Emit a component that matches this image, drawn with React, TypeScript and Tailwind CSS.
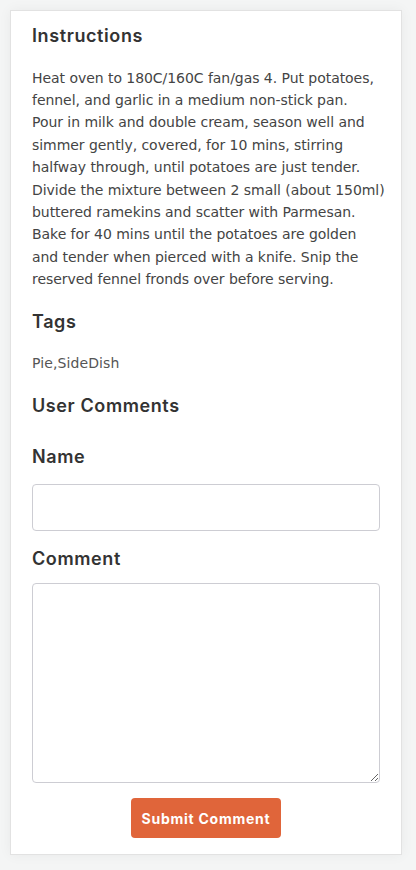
function Heading({ children, className = '' }: { children: React.ReactNode; className?: string }) {
  return (
    <h2 className={`text-[18px] font-semibold leading-[21.6px] tracking-[0.6px] text-[#333] ${className}`}>
      {children}
    </h2>
  )
}

const body = "[font-family:'DejaVu_Sans',sans-serif] text-[14px] leading-[22.4px]"

const instructionLines = [
  'Heat oven to 180C/160C fan/gas 4. Put potatoes,',
  'fennel, and garlic in a medium non-stick pan.',
  'Pour in milk and double cream, season well and',
  'simmer gently, covered, for 10 mins, stirring',
  'halfway through, until potatoes are just tender.',
  'Divide the mixture between 2 small (about 150ml)',
  'buttered ramekins and scatter with Parmesan.',
  'Bake for 40 mins until the potatoes are golden',
  'and tender when pierced with a knife. Snip the',
  'reserved fennel fronds over before serving.',
]

export default function App() {
  return (
    <div className="min-h-screen bg-[#f4f5f5] pb-[15px] pl-[10px] pr-[14px] pt-[10px] [font-family:Inter,'Noto_Sans',sans-serif]">
      <div className="border border-[#e2e2e2] bg-white px-[21px] pb-[16px] pt-[14px] shadow-[0_0_12px_rgba(0,0,0,0.05)]">
        <Heading className="mb-[20px]">Instructions</Heading>
        <p className={`mb-[20px] whitespace-nowrap tracking-[-0.05px] text-[#444] ${body}`}>
          {instructionLines.map((line, i) => (
            <span key={i}>
              {line}
              {i < instructionLines.length - 1 && <br />}
            </span>
          ))}
        </p>

        <Heading className="mb-[20px]">Tags</Heading>
        <p className={`mb-[20px] tracking-[0.1px] text-[#555] ${body}`}>Pie,SideDish</p>

        <Heading className="mb-[30px]">User Comments</Heading>

        <form onSubmit={(e) => e.preventDefault()}>
          <label htmlFor="name" className="mb-[16px] block">
            <Heading>Name</Heading>
          </label>
          <input
            id="name"
            type="text"
            className="mb-[17px] block h-[47px] w-full rounded-[4px] border border-[#cdcdd3] bg-white px-3 text-[14px] text-[#333] outline-none"
          />
          <label htmlFor="comment" className="mb-[14px] block">
            <Heading>Comment</Heading>
          </label>
          <textarea
            id="comment"
            className="mb-[15px] block h-[200px] w-full rounded-[4px] border border-[#cdcdd3] bg-white px-3 py-2 text-[14px] text-[#333] outline-none"
          />
          <div className="flex justify-center">
            <button
              type="submit"
              className="h-[40px] w-[150px] rounded-[4px] bg-[#e0653a] text-[14px] font-bold tracking-[0.75px] text-white"
            >
              Submit Comment
            </button>
          </div>
        </form>
      </div>
    </div>
  )
}
